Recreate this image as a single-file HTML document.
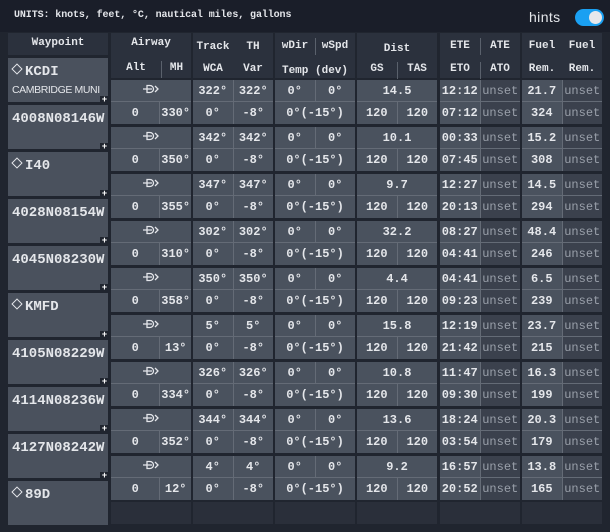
<!DOCTYPE html>
<html><head><meta charset="utf-8"><style>
*{box-sizing:border-box;margin:0;padding:0}
body{width:610px;height:532px;background:#20252f;font-family:"Liberation Mono","DejaVu Sans Mono",monospace;color:#e4e6ea;position:relative;overflow:hidden;font-size:12px}
.top{position:absolute;left:0;top:0;width:610px;height:32px;background:#1a1e29}
.units{position:absolute;left:14px;top:10px;font-size:10px;font-weight:bold;letter-spacing:-0.1px}
.hints{position:absolute;left:529px;top:9px;font-family:"Liberation Sans",sans-serif;font-size:14px;letter-spacing:0.4px}
.tog{position:absolute;left:575px;top:9px;width:29px;height:17px;border-radius:9px;background:#1aa0f2}
.tog i{position:absolute;right:2px;top:2px;width:13px;height:13px;border-radius:50%;background:#e6e8ec}
.h{position:absolute;background:#2b313d;font-size:11px;font-weight:bold}
.h span{position:absolute;text-align:center}
.vd{position:absolute;width:1px;height:17px;background:#5a616c}
.wp{position:absolute;left:8px;width:100px;height:44px;background:#4a515d}
.wp b{position:absolute;left:4px;top:6px;font-weight:bold;font-size:14px}
.wp small{position:absolute;left:4px;top:26px;font-family:"Liberation Sans",sans-serif;font-size:10.5px;letter-spacing:-0.4px}
.wp em{position:absolute;right:-1px;bottom:-3px;width:9px;height:9px;background:#20252f;color:#fff;font-style:normal;font-size:9px;line-height:9px;text-align:center;font-weight:bold}
.dm{display:inline-block;width:8px;height:8px;border:1.5px solid #e4e6ea;transform:rotate(45deg);margin:0 4px 2px 1px}
.g{position:absolute;width:80px;height:44px;background:#4a525e}
.r{position:absolute;left:0;width:100%;height:22px;display:flex}
.r1{top:0;border-bottom:1px solid #646b76}
.r2{top:22px;height:22px}
.c{flex:1;text-align:center;line-height:22px;font-size:12px;font-weight:bold}
.c+.c{border-left:1px solid #646b76}
.u{background:#3b414d;color:#9aa0aa;font-weight:normal}
.e{position:absolute;top:502px;height:22px;background:#2a2f3a}
</style></head><body>
<div class="top"><div class="units">UNITS: knots, feet, °C, nautical miles, gallons</div><div class="hints">hints</div><div class="tog"><i></i></div></div>

<div class="h" style="left:8px;top:33px;width:100px;height:22px"><span style="left:0;width:100%;top:4px">Waypoint</span></div>
<div class="h" style="left:111px;top:33px;width:80px;height:45px"><span style="left:0;width:100%;top:4px">Airway</span><span style="left:0;width:50px;top:29px">Alt</span><div class="vd" style="left:50px;top:28px"></div><span style="left:51px;width:29px;top:29px">MH</span></div>
<div class="h" style="left:193px;top:33px;width:80px;height:45px"><span style="left:0;width:40px;top:8px">Track</span><span style="left:40px;width:40px;top:8px">TH</span><span style="left:0;width:40px;top:30px">WCA</span><span style="left:40px;width:40px;top:30px">Var</span></div>
<div class="h" style="left:275px;top:33px;width:80px;height:45px"><span style="left:0;width:40px;top:7px">wDir</span><div class="vd" style="left:40px;top:5px"></div><span style="left:40px;width:40px;top:7px">wSpd</span><span style="left:0;width:80px;top:32px">Temp (dev)</span></div>
<div class="h" style="left:357px;top:33px;width:80px;height:45px"><span style="left:0;width:100%;top:10px">Dist</span><span style="left:0;width:40px;top:30px">GS</span><div class="vd" style="left:40px;top:29px"></div><span style="left:40px;width:40px;top:30px">TAS</span></div>
<div class="h" style="left:440px;top:33px;width:80px;height:45px"><span style="left:0;width:40px;top:7px">ETE</span><div class="vd" style="left:40px;top:5px"></div><span style="left:40px;width:40px;top:7px">ATE</span><span style="left:0;width:40px;top:30px">ETO</span><div class="vd" style="left:40px;top:29px"></div><span style="left:40px;width:40px;top:30px">ATO</span></div>
<div class="h" style="left:522px;top:33px;width:80px;height:45px"><span style="left:0;width:40px;top:7px">Fuel</span><span style="left:40px;width:40px;top:7px">Fuel</span><span style="left:0;width:40px;top:30px">Rem.</span><span style="left:40px;width:40px;top:30px">Rem.</span></div>

<div class="wp" style="top:58px"><b><i class="dm"></i>KCDI</b><small>CAMBRIDGE MUNI</small><em>+</em></div>
<div class="wp" style="top:105px"><b>4008N08146W</b><em>+</em></div>
<div class="wp" style="top:152px"><b><i class="dm"></i>I40</b><em>+</em></div>
<div class="wp" style="top:199px"><b>4028N08154W</b><em>+</em></div>
<div class="wp" style="top:246px"><b>4045N08230W</b><em>+</em></div>
<div class="wp" style="top:293px"><b><i class="dm"></i>KMFD</b><em>+</em></div>
<div class="wp" style="top:340px"><b>4105N08229W</b><em>+</em></div>
<div class="wp" style="top:387px"><b>4114N08236W</b><em>+</em></div>
<div class="wp" style="top:434px"><b>4127N08242W</b><em>+</em></div>
<div class="wp" style="top:481px"><b><i class="dm"></i>89D</b></div>

<svg width="0" height="0" style="position:absolute"><defs><symbol id="aw" viewBox="0 0 20 10"><path d="M2 5H11M6 1.5H9A3.5 3.5 0 0 1 9 8.5H6Z M14 2l3 3-3 3" fill="none" stroke="#e4e6ea" stroke-width="1.3"/></symbol></defs></svg>

<div style="position:absolute;left:0;top:80px;width:610px">
<div class="g" style="left:111px;top:0"><div class="r r1"><div class="c"><svg width="20" height="10"><use href="#aw"/></svg></div></div><div class="r r2"><div class="c" style="flex:49">0</div><div class="c" style="flex:31">330°</div></div></div>
<div class="g" style="left:193px;top:0"><div class="r r1"><div class="c">322°</div><div class="c">322°</div></div><div class="r r2"><div class="c">0°</div><div class="c">-8°</div></div></div>
<div class="g" style="left:275px;top:0"><div class="r r1"><div class="c">0°</div><div class="c">0°</div></div><div class="r r2"><div class="c">0°(-15°)</div></div></div>
<div class="g" style="left:357px;top:0"><div class="r r1"><div class="c">14.5</div></div><div class="r r2"><div class="c">120</div><div class="c">120</div></div></div>
<div class="g" style="left:440px;top:0"><div class="r r1"><div class="c">12:12</div><div class="c u">unset</div></div><div class="r r2"><div class="c">07:12</div><div class="c u">unset</div></div></div>
<div class="g" style="left:522px;top:0"><div class="r r1"><div class="c">21.7</div><div class="c u">unset</div></div><div class="r r2"><div class="c">324</div><div class="c u">unset</div></div></div>
</div>

<div style="position:absolute;left:0;top:127px;width:610px">
<div class="g" style="left:111px"><div class="r r1"><div class="c"><svg width="20" height="10"><use href="#aw"/></svg></div></div><div class="r r2"><div class="c" style="flex:49">0</div><div class="c" style="flex:31">350°</div></div></div>
<div class="g" style="left:193px"><div class="r r1"><div class="c">342°</div><div class="c">342°</div></div><div class="r r2"><div class="c">0°</div><div class="c">-8°</div></div></div>
<div class="g" style="left:275px"><div class="r r1"><div class="c">0°</div><div class="c">0°</div></div><div class="r r2"><div class="c">0°(-15°)</div></div></div>
<div class="g" style="left:357px"><div class="r r1"><div class="c">10.1</div></div><div class="r r2"><div class="c">120</div><div class="c">120</div></div></div>
<div class="g" style="left:440px"><div class="r r1"><div class="c">00:33</div><div class="c u">unset</div></div><div class="r r2"><div class="c">07:45</div><div class="c u">unset</div></div></div>
<div class="g" style="left:522px"><div class="r r1"><div class="c">15.2</div><div class="c u">unset</div></div><div class="r r2"><div class="c">308</div><div class="c u">unset</div></div></div>
</div>

<div style="position:absolute;left:0;top:174px;width:610px">
<div class="g" style="left:111px"><div class="r r1"><div class="c"><svg width="20" height="10"><use href="#aw"/></svg></div></div><div class="r r2"><div class="c" style="flex:49">0</div><div class="c" style="flex:31">355°</div></div></div>
<div class="g" style="left:193px"><div class="r r1"><div class="c">347°</div><div class="c">347°</div></div><div class="r r2"><div class="c">0°</div><div class="c">-8°</div></div></div>
<div class="g" style="left:275px"><div class="r r1"><div class="c">0°</div><div class="c">0°</div></div><div class="r r2"><div class="c">0°(-15°)</div></div></div>
<div class="g" style="left:357px"><div class="r r1"><div class="c">9.7</div></div><div class="r r2"><div class="c">120</div><div class="c">120</div></div></div>
<div class="g" style="left:440px"><div class="r r1"><div class="c">12:27</div><div class="c u">unset</div></div><div class="r r2"><div class="c">20:13</div><div class="c u">unset</div></div></div>
<div class="g" style="left:522px"><div class="r r1"><div class="c">14.5</div><div class="c u">unset</div></div><div class="r r2"><div class="c">294</div><div class="c u">unset</div></div></div>
</div>

<div style="position:absolute;left:0;top:221px;width:610px">
<div class="g" style="left:111px"><div class="r r1"><div class="c"><svg width="20" height="10"><use href="#aw"/></svg></div></div><div class="r r2"><div class="c" style="flex:49">0</div><div class="c" style="flex:31">310°</div></div></div>
<div class="g" style="left:193px"><div class="r r1"><div class="c">302°</div><div class="c">302°</div></div><div class="r r2"><div class="c">0°</div><div class="c">-8°</div></div></div>
<div class="g" style="left:275px"><div class="r r1"><div class="c">0°</div><div class="c">0°</div></div><div class="r r2"><div class="c">0°(-15°)</div></div></div>
<div class="g" style="left:357px"><div class="r r1"><div class="c">32.2</div></div><div class="r r2"><div class="c">120</div><div class="c">120</div></div></div>
<div class="g" style="left:440px"><div class="r r1"><div class="c">08:27</div><div class="c u">unset</div></div><div class="r r2"><div class="c">04:41</div><div class="c u">unset</div></div></div>
<div class="g" style="left:522px"><div class="r r1"><div class="c">48.4</div><div class="c u">unset</div></div><div class="r r2"><div class="c">246</div><div class="c u">unset</div></div></div>
</div>

<div style="position:absolute;left:0;top:268px;width:610px">
<div class="g" style="left:111px"><div class="r r1"><div class="c"><svg width="20" height="10"><use href="#aw"/></svg></div></div><div class="r r2"><div class="c" style="flex:49">0</div><div class="c" style="flex:31">358°</div></div></div>
<div class="g" style="left:193px"><div class="r r1"><div class="c">350°</div><div class="c">350°</div></div><div class="r r2"><div class="c">0°</div><div class="c">-8°</div></div></div>
<div class="g" style="left:275px"><div class="r r1"><div class="c">0°</div><div class="c">0°</div></div><div class="r r2"><div class="c">0°(-15°)</div></div></div>
<div class="g" style="left:357px"><div class="r r1"><div class="c">4.4</div></div><div class="r r2"><div class="c">120</div><div class="c">120</div></div></div>
<div class="g" style="left:440px"><div class="r r1"><div class="c">04:41</div><div class="c u">unset</div></div><div class="r r2"><div class="c">09:23</div><div class="c u">unset</div></div></div>
<div class="g" style="left:522px"><div class="r r1"><div class="c">6.5</div><div class="c u">unset</div></div><div class="r r2"><div class="c">239</div><div class="c u">unset</div></div></div>
</div>

<div style="position:absolute;left:0;top:315px;width:610px">
<div class="g" style="left:111px"><div class="r r1"><div class="c"><svg width="20" height="10"><use href="#aw"/></svg></div></div><div class="r r2"><div class="c" style="flex:49">0</div><div class="c" style="flex:31">13°</div></div></div>
<div class="g" style="left:193px"><div class="r r1"><div class="c">5°</div><div class="c">5°</div></div><div class="r r2"><div class="c">0°</div><div class="c">-8°</div></div></div>
<div class="g" style="left:275px"><div class="r r1"><div class="c">0°</div><div class="c">0°</div></div><div class="r r2"><div class="c">0°(-15°)</div></div></div>
<div class="g" style="left:357px"><div class="r r1"><div class="c">15.8</div></div><div class="r r2"><div class="c">120</div><div class="c">120</div></div></div>
<div class="g" style="left:440px"><div class="r r1"><div class="c">12:19</div><div class="c u">unset</div></div><div class="r r2"><div class="c">21:42</div><div class="c u">unset</div></div></div>
<div class="g" style="left:522px"><div class="r r1"><div class="c">23.7</div><div class="c u">unset</div></div><div class="r r2"><div class="c">215</div><div class="c u">unset</div></div></div>
</div>

<div style="position:absolute;left:0;top:362px;width:610px">
<div class="g" style="left:111px"><div class="r r1"><div class="c"><svg width="20" height="10"><use href="#aw"/></svg></div></div><div class="r r2"><div class="c" style="flex:49">0</div><div class="c" style="flex:31">334°</div></div></div>
<div class="g" style="left:193px"><div class="r r1"><div class="c">326°</div><div class="c">326°</div></div><div class="r r2"><div class="c">0°</div><div class="c">-8°</div></div></div>
<div class="g" style="left:275px"><div class="r r1"><div class="c">0°</div><div class="c">0°</div></div><div class="r r2"><div class="c">0°(-15°)</div></div></div>
<div class="g" style="left:357px"><div class="r r1"><div class="c">10.8</div></div><div class="r r2"><div class="c">120</div><div class="c">120</div></div></div>
<div class="g" style="left:440px"><div class="r r1"><div class="c">11:47</div><div class="c u">unset</div></div><div class="r r2"><div class="c">09:30</div><div class="c u">unset</div></div></div>
<div class="g" style="left:522px"><div class="r r1"><div class="c">16.3</div><div class="c u">unset</div></div><div class="r r2"><div class="c">199</div><div class="c u">unset</div></div></div>
</div>

<div style="position:absolute;left:0;top:409px;width:610px">
<div class="g" style="left:111px"><div class="r r1"><div class="c"><svg width="20" height="10"><use href="#aw"/></svg></div></div><div class="r r2"><div class="c" style="flex:49">0</div><div class="c" style="flex:31">352°</div></div></div>
<div class="g" style="left:193px"><div class="r r1"><div class="c">344°</div><div class="c">344°</div></div><div class="r r2"><div class="c">0°</div><div class="c">-8°</div></div></div>
<div class="g" style="left:275px"><div class="r r1"><div class="c">0°</div><div class="c">0°</div></div><div class="r r2"><div class="c">0°(-15°)</div></div></div>
<div class="g" style="left:357px"><div class="r r1"><div class="c">13.6</div></div><div class="r r2"><div class="c">120</div><div class="c">120</div></div></div>
<div class="g" style="left:440px"><div class="r r1"><div class="c">18:24</div><div class="c u">unset</div></div><div class="r r2"><div class="c">03:54</div><div class="c u">unset</div></div></div>
<div class="g" style="left:522px"><div class="r r1"><div class="c">20.3</div><div class="c u">unset</div></div><div class="r r2"><div class="c">179</div><div class="c u">unset</div></div></div>
</div>

<div style="position:absolute;left:0;top:456px;width:610px">
<div class="g" style="left:111px"><div class="r r1"><div class="c"><svg width="20" height="10"><use href="#aw"/></svg></div></div><div class="r r2"><div class="c" style="flex:49">0</div><div class="c" style="flex:31">12°</div></div></div>
<div class="g" style="left:193px"><div class="r r1"><div class="c">4°</div><div class="c">4°</div></div><div class="r r2"><div class="c">0°</div><div class="c">-8°</div></div></div>
<div class="g" style="left:275px"><div class="r r1"><div class="c">0°</div><div class="c">0°</div></div><div class="r r2"><div class="c">0°(-15°)</div></div></div>
<div class="g" style="left:357px"><div class="r r1"><div class="c">9.2</div></div><div class="r r2"><div class="c">120</div><div class="c">120</div></div></div>
<div class="g" style="left:440px"><div class="r r1"><div class="c">16:57</div><div class="c u">unset</div></div><div class="r r2"><div class="c">20:52</div><div class="c u">unset</div></div></div>
<div class="g" style="left:522px"><div class="r r1"><div class="c">13.8</div><div class="c u">unset</div></div><div class="r r2"><div class="c">165</div><div class="c u">unset</div></div></div>
</div>

<div class="e" style="left:111px;width:80px"></div>
<div class="e" style="left:193px;width:80px"></div>
<div class="e" style="left:275px;width:80px"></div>
<div class="e" style="left:357px;width:80px"></div>
<div class="e" style="left:440px;width:80px"></div>
<div class="e" style="left:522px;width:80px"></div>
</body></html>
